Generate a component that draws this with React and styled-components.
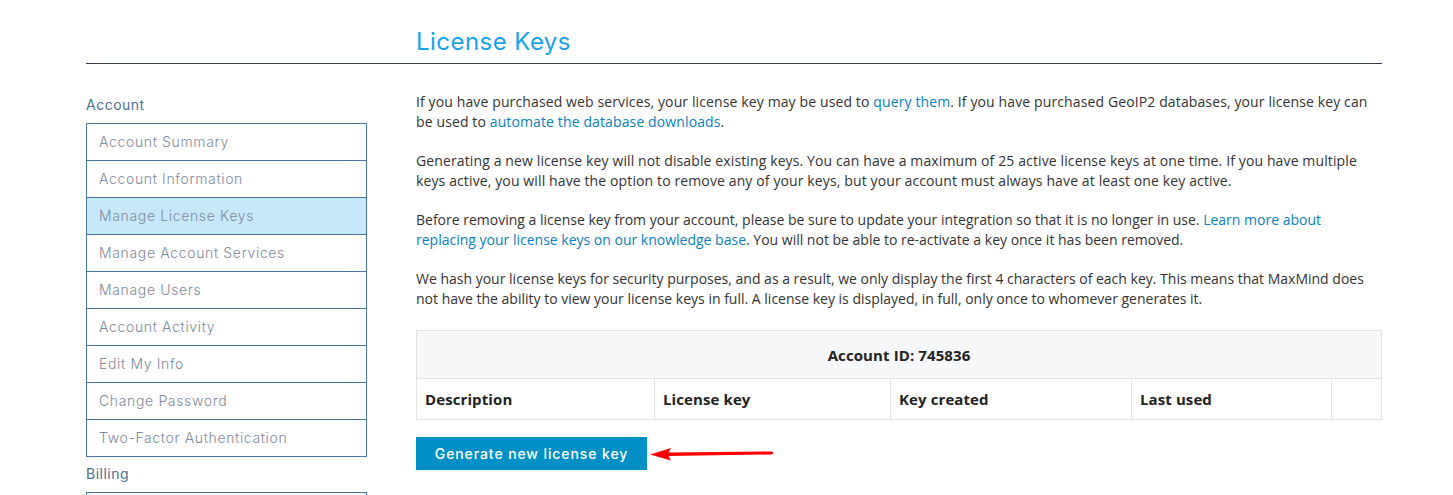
import React from 'react';
import styled, { createGlobalStyle } from 'styled-components'

const GlobalStyle = createGlobalStyle`
  body {
    margin: 0;
    background: #fff;
    font-family: 'Open Sans', 'Liberation Sans', sans-serif;
    color: #333;
  }
`

const Page = styled.div`
  display: grid;
  grid-template-columns: 281px 1fr;
  column-gap: 49px;
  width: 1295px;
  padding-left: 86px;
`

// 상단 제목 줄
const Header = styled.header`
  grid-column: 1 / 3;
  display: grid;
  grid-template-columns: 281px 1fr;
  column-gap: 49px;
  border-bottom: 1px solid #333d47;
  padding-top: 27px;
  height: 36px;
  box-sizing: content-box;
`

const Title = styled.h1`
  grid-column: 2;
  margin: 0;
  font-family: Inter, 'Open Sans', sans-serif;
  font-weight: 400;
  font-size: 24px;
  line-height: 30px;
  letter-spacing: 0.45px;
  color: #1aa3e8;
`

const Sidebar = styled.nav`
  padding-top: 24px;
`

const SectionLabel = styled.div`
  font-family: Inter, 'Open Sans', sans-serif;
  font-size: 14px;
  color: #4f6f94;
  height: 35px;
  line-height: 34px;
  letter-spacing: 0.5px;
`

const MenuList = styled.ul`
  list-style: none;
  margin: 0;
  padding: 0;
  border: 1px solid #4a76a6;
  border-bottom: none;
`

const MenuItem = styled.li`
  height: 36px;
  border-bottom: 1px solid #4a76a6;
  padding-left: 12px;
  line-height: 36px;
  font-family: Inter, 'Open Sans', sans-serif;
  font-weight: 300;
  font-size: 14px;
  letter-spacing: 0.65px;
  color: #7f8a9c;
  background: ${(props) => (props.$active ? '#c7e8f9' : '#fff')};
`

const Content = styled.main`
  padding-top: 28px;
`

const Para = styled.p`
  margin: 0 0 19px;
  font-size: 14px;
  line-height: 20px;
  letter-spacing: ${(props) => (props.$wide ? '0.12px' : '0')};
  color: #333;
`

const Link = styled.a`
  color: #0a7fc2;
  text-decoration: none;
`

const Table = styled.table`
  width: 100%;
  table-layout: fixed;
  border-collapse: collapse;
  margin-top: 21px;
`

const Col = styled.col`
  width: ${(props) => props.$w}px;
`

const Caption = styled.th`
  height: 47px;
  padding: 0;
  background: #f7f8fa;
  border: 1px solid #dee2e6;
  font-size: 15px;
  font-weight: 700;
  letter-spacing: 0.1px;
  color: #222;
  text-align: center;
`

const HeadCell = styled.th`
  height: 40px;
  border: 1px solid #dee2e6;
  padding: 0 8px;
  text-align: left;
  font-size: 15px;
  font-weight: 700;
  letter-spacing: 0.1px;
  color: #222;
`

const Actions = styled.div`
  display: flex;
  align-items: center;
  gap: 2px;
  margin-top: 17px;
`

const Button = styled.button`
  width: 231px;
  height: 33px;
  padding: 0;
  border: none;
  background: #0090c6;
  color: #fff;
  font-family: Inter, 'Open Sans', sans-serif;
  font-weight: 500;
  font-size: 14px;
  letter-spacing: 0.9px;
  cursor: pointer;
`

const menu = [
  'Account Summary',
  'Account Information',
  'Manage License Keys',
  'Manage Account Services',
  'Manage Users',
  'Account Activity',
  'Edit My Info',
  'Change Password',
  'Two-Factor Authentication',
]

const columns = [
  ['Description', 238],
  ['License key', 236],
  ['Key created', 241],
  ['Last used', 200],
  ['', 50],
]

function Arrow() {
  return (
    <svg width="126" height="18" viewBox="0 0 126 18">
      <path d="M1 9.5 L22 3 L19.5 7.5 L123 6.5 Q125.5 8 123 9.5 L19.5 11 L22 15.5 Z" fill="#f00" />
    </svg>
  )
}

export default function App() {
  return (
    <>
      <GlobalStyle />
      <Page>
        <Header>
          <Title>License Keys</Title>
        </Header>
        <Sidebar>
          <SectionLabel>Account</SectionLabel>
          <MenuList>
            {menu.map((m) => (
              <MenuItem key={m} $active={m === 'Manage License Keys'}>{m}</MenuItem>
            ))}
          </MenuList>
          <SectionLabel>Billing</SectionLabel>
          <MenuList>
            <MenuItem>Billing Summary</MenuItem>
          </MenuList>
        </Sidebar>
        <Content>
          <Para $wide>
            If you have purchased web services, your license key may be used to <Link href="#">query them</Link>. If you have purchased GeoIP2 databases, your license key can be used to <Link href="#">automate the database downloads</Link>.
          </Para>
          <Para $wide>
            Generating a new license key will not disable existing keys. You can have a maximum of 25 active license keys at one time. If you have multiple keys active, you will have the option to remove any of your keys, but your account must always have at least one key active.
          </Para>
          <Para>
            Before removing a license key from your account, please be sure to update your integration so that it is no longer in use. <Link href="#">Learn more about replacing your license keys on our knowledge base</Link>. You will not be able to re-activate a key once it has been removed.
          </Para>
          <Para>
            We hash your license keys for security purposes, and as a result, we only display the first 4 characters of each key. This means that MaxMind does not have the ability to view your license keys in full. A license key is displayed, in full, only once to whomever generates it.
          </Para>
          <Table>
            <colgroup>
              {columns.map(([c, w]) => (
                <Col key={w} $w={w} />
              ))}
            </colgroup>
            <thead>
              <tr>
                <Caption colSpan={5}>Account ID: 745836</Caption>
              </tr>
              <tr>
                {columns.map(([c, w]) => (
                  <HeadCell key={w}>{c}</HeadCell>
                ))}
              </tr>
            </thead>
          </Table>
          <Actions>
            <Button>Generate new license key</Button>
            <Arrow />
          </Actions>
        </Content>
      </Page>
    </>
  )
}
